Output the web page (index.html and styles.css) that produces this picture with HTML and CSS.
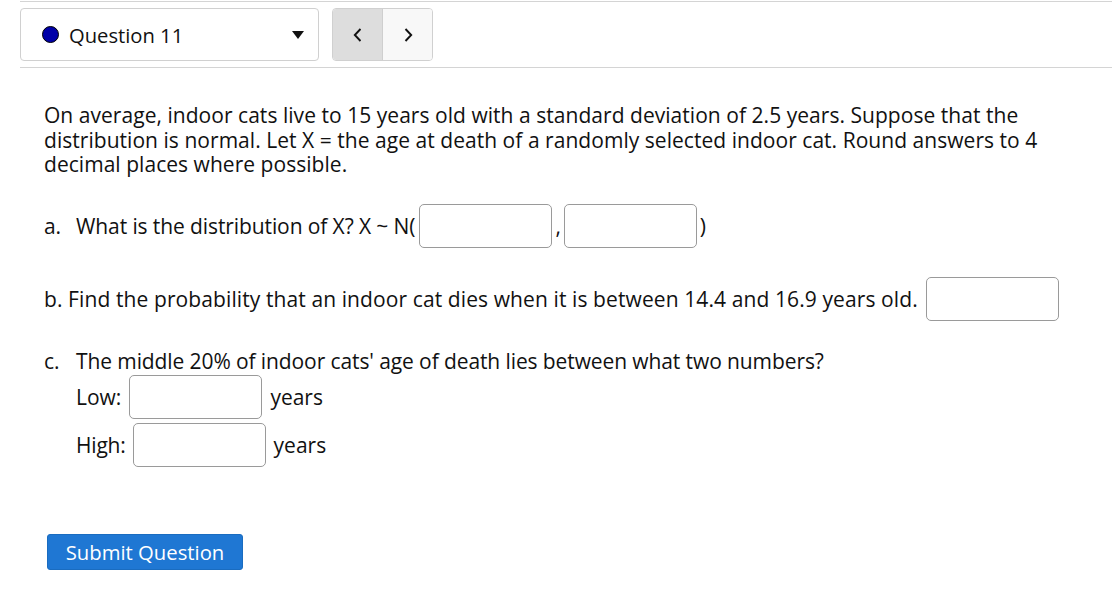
FILE: index.html
```html
<!DOCTYPE html>
<html>
<head>
<meta charset="utf-8">
<link rel="stylesheet" href="styles.css">
</head>
<body>
<div class="header">
  <div class="dropdown">
    <span class="dot"></span>
    <span class="qlabel">Question 11</span>
    <span class="caret"></span>
  </div>
  <div class="nav">
    <button class="navbtn prev" aria-label="Previous">
      <svg width="10" height="14" viewBox="0 0 10 14"><path d="M7.5 1 L1.8 7 L7.5 13" fill="none" stroke="#111" stroke-width="1.9"/></svg>
    </button>
    <button class="navbtn next" aria-label="Next">
      <svg width="10" height="14" viewBox="0 0 10 14"><path d="M2.5 1 L8.2 7 L2.5 13" fill="none" stroke="#111" stroke-width="1.9"/></svg>
    </button>
  </div>
</div>

<div class="question">
  <p class="intro">On average, indoor cats live to 15 years old with a standard deviation of 2.5 years. Suppose that the distribution is normal. Let X = the age at death of a randomly selected indoor cat. Round answers to 4 decimal places where possible.</p>

  <div class="part part-a">
    <span class="plabel">a.</span><span class="ptext">What is the distribution of X? X ~ N(</span><input class="ans" type="text"><span class="comma">,</span><input class="ans" type="text"><span class="paren">)</span>
  </div>

  <div class="part part-b">
    <span class="ptext">b. Find the probability that an indoor cat dies when it is between 14.4 and 16.9 years old.</span><input class="ans ans-b" type="text">
  </div>

  <div class="part part-c">
    <span class="plabel">c.</span><span class="ptext">The middle 20% of indoor cats' age of death lies between what two numbers?</span>
  </div>
  <div class="row">
    <span class="rlabel">Low:</span><input class="ans" type="text"><span class="unit">years</span>
  </div>
  <div class="row">
    <span class="rlabel rlabel-high">High:</span><input class="ans" type="text"><span class="unit">years</span>
  </div>

  <button class="submit">Submit Question</button>
</div>
</body>
</html>
```

FILE: styles.css
```css
html, body {
  margin: 0;
  padding: 0;
  background: #fff;
}
body {
  font-family: "Open Sans", sans-serif;
  color: #111;
}
.header {
  margin: 1px 0 0 20px;
  border-top: 1px solid #d4d4d4;
  border-bottom: 1px solid #d4d4d4;
  padding: 6px 0;
  display: flex;
  gap: 13px;
}
.dropdown {
  box-sizing: border-box;
  width: 299px;
  height: 53px;
  border: 1px solid #d0d0d0;
  border-radius: 4px;
  display: flex;
  align-items: center;
  padding-left: 21px;
}
.dot {
  box-sizing: border-box;
  width: 17px;
  height: 17px;
  border-radius: 50%;
  background: #0000a8;
  border: 1.5px solid #000;
  margin-right: 10px;
}
.qlabel {
  font-size: 20.2px;
  color: #111;
}
.caret {
  margin-left: auto;
  margin-right: 14px;
  width: 0;
  height: 0;
  border-left: 6px solid transparent;
  border-right: 6px solid transparent;
  border-top: 8px solid #111;
}
.nav {
  display: flex;
  box-sizing: border-box;
  width: 101px;
  height: 53px;
  border: 1px solid #d0d0d0;
  border-radius: 4px;
  overflow: hidden;
}
.navbtn {
  flex: 1;
  border: 0;
  padding: 0;
  margin: 0;
  display: flex;
  align-items: center;
  justify-content: center;
}
.prev {
  background: #dddddd;
  border-right: 1px solid #cfcfcf;
}
.next {
  background: #f8f8f8;
}
.question {
  padding: 35px 0 0 44px;
  font-size: 21px;
  letter-spacing: 0.04px;
  color: #111;
}
.intro {
  margin: 0;
  line-height: 24.5px;
  max-width: 1010px;
}
.part {
  display: flex;
  align-items: center;
  line-height: 24px;
}
.part-a {
  margin-top: 27px;
  letter-spacing: -0.1px;
}
.part-b {
  margin-top: 29px;
  letter-spacing: 0.1px;
}
.part-c {
  margin-top: 28px;
  letter-spacing: -0.1px;
}
.plabel {
  width: 32px;
}
.ans {
  box-sizing: border-box;
  width: 133px;
  height: 44px;
  border: 1px solid #9a9a9a;
  border-radius: 5px;
  margin: 0;
  padding: 0 6px;
  font-size: 18px;
  background: #fff;
}
.part-a .ptext {
  margin-right: 4px;
}
.comma {
  margin: 0 3px;
}
.paren {
  margin-left: 3px;
}
.ans-b {
  margin-left: 8px;
}
.row {
  display: flex;
  align-items: center;
  padding-left: 32px;
  margin-top: 4px;
  font-size: 21px;
  letter-spacing: 0;
}
.part-c + .row {
  margin-top: 2px;
}
.rlabel {
  margin-right: 8px;
}
.rlabel-high {
  margin-right: 7px;
  letter-spacing: -0.2px;
}
.unit {
  margin-left: 8px;
}
.submit {
  display: block;
  margin: 67px 0 0 3px;
  width: 196px;
  height: 36px;
  background: #1f77d3;
  color: #fff;
  border: 1px solid #1a6cc0;
  border-radius: 3px;
  font-family: "Open Sans", sans-serif;
  font-size: 20.3px;
  letter-spacing: 0;
  padding: 0;
}
```
